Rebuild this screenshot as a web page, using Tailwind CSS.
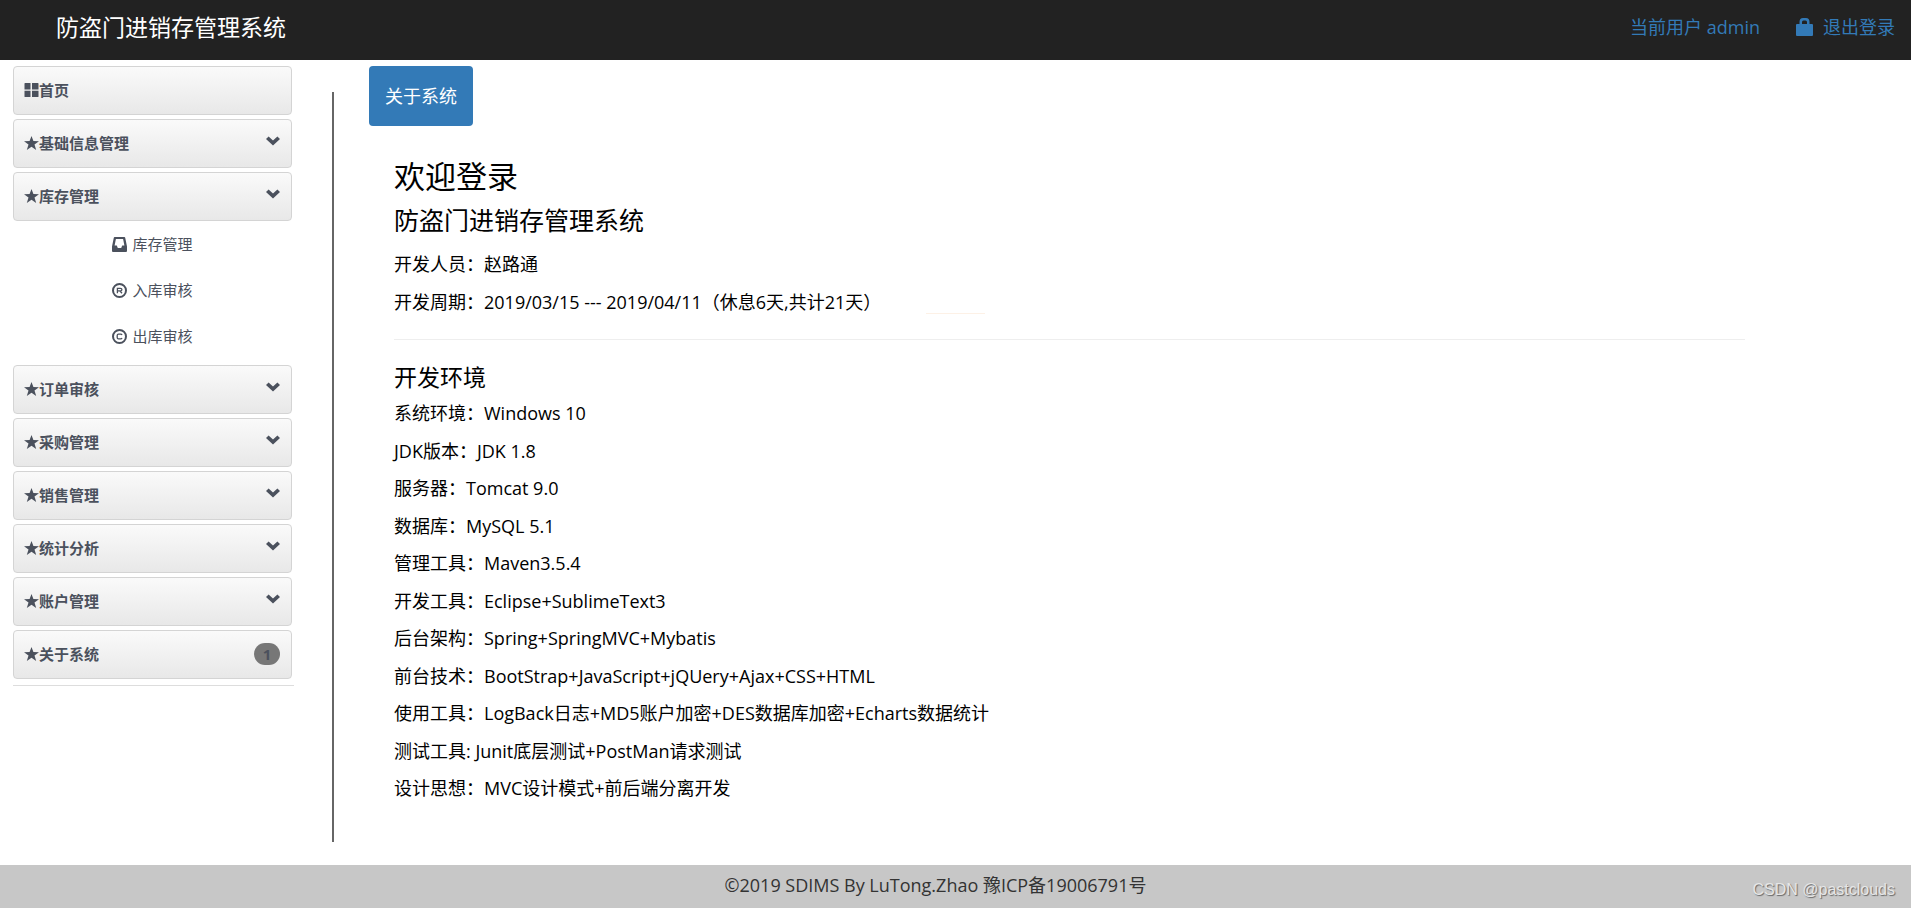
<!DOCTYPE html>
<html lang="zh-CN">
<head>
    <meta charset="UTF-8">
    <meta name="viewport" content="width=device-width, initial-scale=1.0">
    <title>防盗门进销存管理系统</title>
    <script src="https://cdn.jsdelivr.net/npm/@tailwindcss/browser@4"></script>
</head>
<body class="min-h-screen flex flex-col bg-white text-black text-[18px] leading-7 font-['Open_Sans','Noto_Sans_CJK_SC',sans-serif]">
    <!-- icons -->
    <svg class="hidden">
        <symbol id="icon-grid" viewBox="0 0 14 14"><path d="M0 .6Q0 0 .6 0H6v6.500H0zM7.500 0h5.900q.6 0 .6.600V6.500H7.500zM0 7.800h6V14H.6Q0 14 0 13.400zM7.500 7.800H14v5.600q0 .6-.6.600H7.500z"/></symbol>
        <symbol id="icon-star" viewBox="0 0 15 14"><path d="M7.500 0l1.900 5.100 5.600.1-4.500 3.300 1.700 5.500-4.700-3.300L2.800 14l1.700-5.500L0 5.200l5.600-.1z"/></symbol>
        <symbol id="icon-down" viewBox="0 0 14 10"><path d="M2.600.4L7 4.600 11.400.4 14 2.900 7 9.600 0 2.900z"/></symbol>
        <symbol id="icon-lock" viewBox="0 0 17 18"><path fill-rule="evenodd" d="M3.500 6V4Q3.500 0 7 0h3q3.500 0 3.500 4v2H16q1 0 1 1v10q0 1-1 1H1q-1 0-1-1V7q0-1 1-1zM6 6h5V4q0-1.500-1.500-1.500h-2Q6 2.500 6 4z"/></symbol>
        <symbol id="icon-inbox" viewBox="0 0 15 15"><path fill-rule="evenodd" d="M2.600 0h9.800q.6 0 .8.700L15 9.500V14q0 1-1 1H1q-1 0-1-1V9.500L1.800.7Q2 0 2.600 0zM3.900 2L2.600 8.600h2.200l1 2.400h3.400l1-2.400h2.200L11.100 2z"/></symbol>
        <symbol id="icon-reg" viewBox="0 0 15 15"><circle cx="7.500" cy="7.500" r="6.500" fill="none" stroke="currentColor" stroke-width="2"/><path d="M5.400 10.200V5.300h3q1.500 0 1.500 1.300T8.400 7.900h-3M8 8l2 2.200" fill="none" stroke="currentColor" stroke-width="1.300"/></symbol>
        <symbol id="icon-copy" viewBox="0 0 15 15"><circle cx="7.500" cy="7.500" r="6.500" fill="none" stroke="currentColor" stroke-width="2"/><path d="M10 6Q9.700 5.200 8.700 5.200H6.400Q5.200 5.200 5.200 6.500v2q0 1.300 1.200 1.300h2.300q1 0 1.300-.8" fill="none" stroke="currentColor" stroke-width="1.300"/></symbol>
    </svg>

    <header class="h-15 bg-[#222] flex items-start justify-between pl-14 pr-4">
        <h1 class="text-[23px] leading-[54px] text-white">防盗门进销存管理系统</h1>
        <nav class="flex items-center leading-[54px] text-[#337ab7]">
            <a href="#" class="mr-9">当前用户 admin</a>
            <a href="#" class="flex items-center gap-[10px]"><svg class="w-[17px] h-[18px]" fill="currentColor"><use href="#icon-lock"/></svg>退出登录</a>
        </nav>
    </header>

    <div class="flex-1 flex">
        <aside class="w-[294px] shrink-0 pt-[6px] pl-[13px] text-[15px] text-[#4b515d]">
            <ul id="menu" class="flex flex-col gap-1 border-b border-[#ddd] pb-[6px]"></ul>
        </aside>

        <!-- divider -->
        <div class="w-[2px] shrink-0 ml-[38px] mt-8 mb-[23px] bg-[#666]"></div>

        <main class="flex-1 flex flex-col pl-[35px] pt-[6px] pb-[63px]">
            <button class="self-start h-15 px-4 rounded bg-[#337ab7] text-white">关于系统</button>
            <section class="flex-1 flex flex-col ml-[25px] mr-[166px] pt-[30px]">
                <h2 class="text-[31px] leading-10">欢迎登录</h2>
                <h3 class="mt-[2px] text-[25px] leading-11">防盗门进销存管理系统</h3>
                <p class="mt-2">开发人员：赵路通</p>
                <p class="relative mt-[10px]">
                    开发周期：2019/03/15 --- 2019/04/11（休息6天,共计21天）
                    <span class="absolute left-[532px] bottom-[2px] w-[59px] h-px bg-[#fdf1e6]"></span>
                </p>
                <hr class="mt-[23px] border-[#eee]">
                <h4 class="mt-[21px] text-[23px] leading-8">开发环境</h4>
                <ul class="flex-1 flex flex-col justify-between mt-[6px]">
                    <li>系统环境：Windows 10</li>
                    <li>JDK版本：JDK 1.8</li>
                    <li>服务器：Tomcat 9.0</li>
                    <li>数据库：MySQL 5.1</li>
                    <li>管理工具：Maven3.5.4</li>
                    <li>开发工具：Eclipse+SublimeText3</li>
                    <li>后台架构：Spring+SpringMVC+Mybatis</li>
                    <li>前台技术：BootStrap+JavaScript+jQUery+Ajax+CSS+HTML</li>
                    <li>使用工具：LogBack日志+MD5账户加密+DES数据库加密+Echarts数据统计</li>
                    <li>测试工具: Junit底层测试+PostMan请求测试</li>
                    <li>设计思想：MVC设计模式+前后端分离开发</li>
                </ul>
            </section>
        </main>
    </div>

    <footer class="relative h-[43px] bg-[#c7c7c7] pr-10 text-center leading-10 text-[#333]">
        ©2019 SDIMS By LuTong.Zhao 豫ICP备19006791号
        <span class="absolute right-4 bottom-2 text-[16px] leading-5 text-[#e6e6e6] font-['Liberation_Sans',sans-serif] text-shadow-[1px_1px_1px_#666]">CSDN @pastclouds</span>
    </footer>

    <script>
        const menus = [
            { name: "首页", icon: "grid" },
            { name: "基础信息管理", icon: "star", right: "down" },
            { name: "库存管理", icon: "star", right: "down", children: [
                { name: "库存管理", icon: "inbox" },
                { name: "入库审核", icon: "reg" },
                { name: "出库审核", icon: "copy" },
            ] },
            { name: "订单审核", icon: "star", right: "down" },
            { name: "采购管理", icon: "star", right: "down" },
            { name: "销售管理", icon: "star", right: "down" },
            { name: "统计分析", icon: "star", right: "down" },
            { name: "账户管理", icon: "star", right: "down" },
            { name: "关于系统", icon: "star", badge: 1 },
        ];

        document.getElementById("menu").innerHTML = menus.map((item) => `
            <li class="pr-[2px]">
                <button class="w-full h-[49px] flex items-center pl-[10px] pr-[11px] pb-[2px] border border-[#d4d4d4] rounded bg-linear-to-b from-[#fafafa] to-[#e8e8e8] font-bold">
                    <svg class="w-[15px] h-[14px]" fill="currentColor"><use href="#icon-${item.icon}"/></svg>
                    <span>${item.name}</span>
                    ${item.right ? `<svg class="ml-auto mb-1 w-[14px] h-[10px]" fill="currentColor"><use href="#icon-down"/></svg>` : ""}
                    ${item.badge ? `<span class="ml-auto w-[26px] rounded-full bg-[#777] leading-[22px]">${item.badge}</span>` : ""}
                </button>
                ${item.children ? `<ul class="pb-[2px]">${item.children.map((child) => `
                    <li><a href="#" class="h-[46px] flex items-center justify-center gap-[5px]">
                        <svg class="w-[15px] h-[15px]" fill="currentColor"><use href="#icon-${child.icon}"/></svg>${child.name}
                    </a></li>`).join("")}</ul>` : ""}
            </li>`).join("");
    </script>
</body>
</html>
